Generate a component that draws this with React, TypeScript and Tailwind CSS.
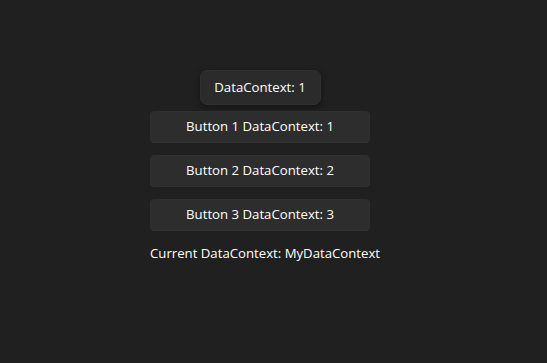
const buttons = [1, 2, 3];

export default function App() {
  return (
    <div
      className="min-h-screen w-full bg-[#202020] text-white text-[13.2px] pl-[150px] pt-[70px]"
      style={{ fontFamily: '"Open Sans", "Noto Sans", sans-serif' }}
    >
      <div className="flex flex-col items-start">
        <div className="w-[220px] flex justify-center">
          <div className="h-[35px] w-[121px] rounded-[7px] bg-[#2b2b2b] border border-[#303030] shadow-[0_2px_6px_rgba(0,0,0,0.45)] flex items-center justify-center">
            DataContext: 1
          </div>
        </div>
        <div className="mt-[6px] flex flex-col gap-[12px]">
          {buttons.map((n) => (
            <button
              key={n}
              className="h-[32px] w-[220px] rounded-[4px] bg-[#2d2d2d] border border-[#303030] flex items-center justify-center text-white"
            >
              Button {n} DataContext: {n}
            </button>
          ))}
        </div>
        <div className="mt-[12px] leading-[20px]">Current DataContext: MyDataContext</div>
      </div>
    </div>
  );
}
